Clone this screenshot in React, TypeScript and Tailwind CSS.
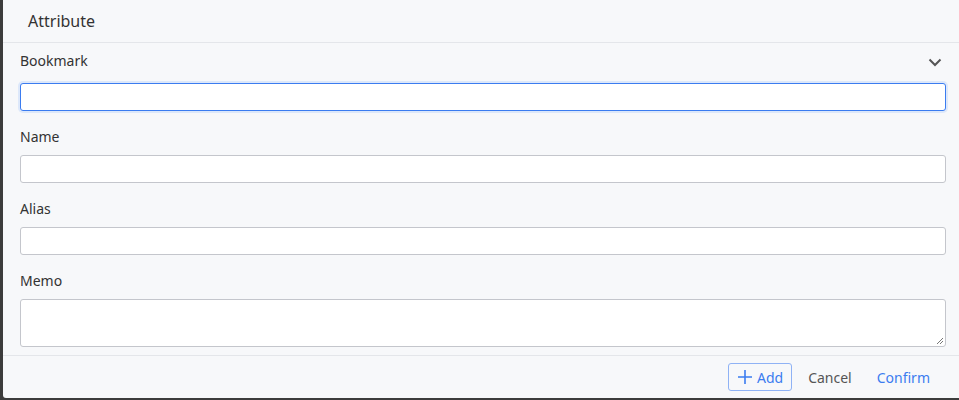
import React from "react";

export default function App() {
  const font = { fontFamily: '"Noto Sans", "Segoe UI", sans-serif' };
  return (
    <div className="w-[959px] h-[400px] bg-[#3c3c3c] flex flex-col" style={font}>
      <div className="ml-[3px] h-[398px] bg-[#f7f8fa] rounded-bl-[3px] flex flex-col text-[#333]">
        <div className="h-[43px] flex items-center pl-[25px] border-b border-[#e4e6ea] text-[16px] text-[#333]">
          Attribute
        </div>
        <div className="flex-1 pl-[17px] pr-[13px] pt-[5px] flex flex-col">
          <div className="h-[24px] flex items-center justify-between text-[14px]">
            <span>Bookmark</span>
            <svg width="16" height="16" viewBox="0 0 16 16" className="mr-[3px] mt-[3px]">
              <path d="M2.5 5.5 L8 11 L13.5 5.5" fill="none" stroke="#555" strokeWidth="2" />
            </svg>
          </div>
          <div className="mt-[11px] h-[28px] rounded-[3px] border border-[#3b7cf0] bg-white shadow-[0_0_0_2px_#dde8fa]" />
          <div className="mt-[15px] h-[20px] flex items-center text-[14px]">Name</div>
          <div className="mt-[9px] h-[28px] rounded-[3px] border border-[#c4c6cc] bg-white" />
          <div className="mt-[15px] h-[20px] flex items-center text-[14px]">Alias</div>
          <div className="mt-[9px] h-[28px] rounded-[3px] border border-[#c4c6cc] bg-white" />
          <div className="mt-[15px] h-[20px] flex items-center text-[14px]">Memo</div>
          <div className="mt-[9px] h-[48px] rounded-[3px] border border-[#c4c6cc] bg-white relative">
            <svg width="8" height="8" viewBox="0 0 8 8" className="absolute right-[1px] bottom-[1px]">
              <path d="M7 1 L1 7 M7 4 L4 7" stroke="#777" strokeWidth="1" />
            </svg>
          </div>
        </div>
        <div className="h-[43px] border-t border-[#e4e6ea] flex items-center justify-end pr-[29px] text-[14px]">
          <button className="h-[28px] px-[8px] flex items-center gap-[4px] border border-[#8fb2f5] rounded-[3px] text-[#3b7cf0] bg-[#f7f8fa]">
            <svg width="16" height="16" viewBox="0 0 16 16">
              <path d="M8 1 V15 M1 8 H15" stroke="#3b7cf0" strokeWidth="1.6" />
            </svg>
            <span>Add</span>
          </button>
          <button className="ml-[16px] text-[#555]">Cancel</button>
          <button className="ml-[25px] text-[#3b7cf0]">Confirm</button>
        </div>
      </div>
    </div>
  );
}
